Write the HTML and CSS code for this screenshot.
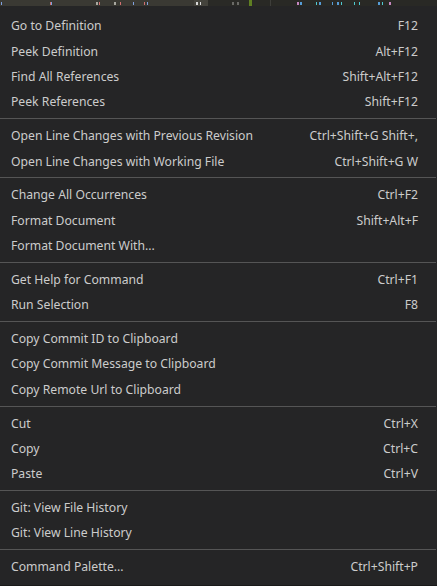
FILE: index.html
```html
<!DOCTYPE html>
<html>
<head>
<meta charset="utf-8">
<link rel="stylesheet" href="styles.css">
</head>
<body>
<div class="editor-strip">
  <div class="seg seg-a">
    <i class="mk w1 blu" style="margin-left:1px"></i>
    <i class="mk w1 red" style="margin-left:48px"></i>
    <i class="mk w1 blu"></i>
    <i class="mk w2 gry" style="margin-left:44px"></i>
    <i class="mk w1 red" style="margin-left:1px"></i>
    <i class="mk w2 gry" style="margin-left:14px"></i>
    <i class="mk w1 red" style="margin-left:4px"></i>
    <i class="mk w1 blu" style="margin-left:12px"></i>
    <i class="mk w1 red" style="margin-left:10px"></i>
    <i class="mk w1 blu" style="margin-left:2px"></i>
  </div>
  <div class="seg seg-b">
    <i class="mk w2 wht" style="margin-left:2px"></i>
    <i class="mk w1 wht" style="margin-left:2px"></i>
  </div>
  <div class="seg seg-c">
    <i class="mk w2 dim" style="margin-left:24px"></i>
    <i class="mk w2 dim" style="margin-left:3px"></i>
  </div>
  <div class="gutter"></div>
  <div class="seg seg-d"></div>
  <div class="vline"></div>
  <div class="seg seg-e">
    <i class="mk w2 mag" style="margin-left:26px"></i>
    <i class="mk w2 blu2" style="margin-left:1px"></i>
    <i class="mk w1 cyn" style="margin-left:14px"></i>
    <i class="mk w2 blu2" style="margin-left:2px"></i>
    <i class="mk w1 blu2" style="margin-left:11px"></i>
    <i class="mk w2 blu2" style="margin-left:4px"></i>
    <i class="mk w1 cyn" style="margin-left:2px"></i>
    <i class="mk w1 cyn" style="margin-left:12px"></i>
    <i class="mk w1 cyn" style="margin-left:4px"></i>
    <i class="mk w2 blu2" style="margin-left:18px"></i>
    <i class="mk w1 cyn" style="margin-left:2px"></i>
    <i class="mk w2 mag" style="margin-left:6px"></i>
  </div>
</div>
<div class="menu">
  <div class="item"><span class="label">Go to Definition</span><span class="key">F12</span></div>
  <div class="item"><span class="label">Peek Definition</span><span class="key">Alt+F12</span></div>
  <div class="item"><span class="label">Find All References</span><span class="key">Shift+Alt+F12</span></div>
  <div class="item"><span class="label">Peek References</span><span class="key">Shift+F12</span></div>
  <div class="sep"></div>
  <div class="item"><span class="label">Open Line Changes with Previous Revision</span><span class="key">Ctrl+Shift+G Shift+,</span></div>
  <div class="item"><span class="label">Open Line Changes with Working File</span><span class="key">Ctrl+Shift+G W</span></div>
  <div class="sep"></div>
  <div class="item"><span class="label">Change All Occurrences</span><span class="key">Ctrl+F2</span></div>
  <div class="item"><span class="label">Format Document</span><span class="key">Shift+Alt+F</span></div>
  <div class="item"><span class="label">Format Document With...</span><span class="key"></span></div>
  <div class="sep"></div>
  <div class="item"><span class="label">Get Help for Command</span><span class="key">Ctrl+F1</span></div>
  <div class="item"><span class="label">Run Selection</span><span class="key">F8</span></div>
  <div class="sep"></div>
  <div class="item"><span class="label">Copy Commit ID to Clipboard</span><span class="key"></span></div>
  <div class="item"><span class="label">Copy Commit Message to Clipboard</span><span class="key"></span></div>
  <div class="item"><span class="label">Copy Remote Url to Clipboard</span><span class="key"></span></div>
  <div class="sep"></div>
  <div class="item"><span class="label">Cut</span><span class="key">Ctrl+X</span></div>
  <div class="item"><span class="label">Copy</span><span class="key">Ctrl+C</span></div>
  <div class="item"><span class="label">Paste</span><span class="key">Ctrl+V</span></div>
  <div class="sep"></div>
  <div class="item"><span class="label">Git: View File History</span><span class="key"></span></div>
  <div class="item"><span class="label">Git: View Line History</span><span class="key"></span></div>
  <div class="sep"></div>
  <div class="item"><span class="label">Command Palette...</span><span class="key">Ctrl+Shift+P</span></div>
</div>
</body>
</html>
```

FILE: styles.css
```css
html, body {
  margin: 0;
  padding: 0;
  background: #1a1a1a;
  width: 437px;
  height: 586px;
  overflow: hidden;
}

.editor-strip {
  display: flex;
  height: 6px;
  overflow: hidden;
  background: #292925;
}

.seg {
  height: 6px;
  display: flex;
  align-items: flex-end;
  padding-bottom: 1px;
  box-sizing: border-box;
}

.mk {
  display: block;
  height: 3px;
  flex: none;
}
.w1 { width: 1px; }
.w2 { width: 2px; }
.blu { background: #7fa0e0; }
.red { background: #d07070; }
.gry { background: #a8a8a0; }
.wht { background: #d8d8d8; }
.dim { background: #6a6a66; }
.mag { background: #c586c0; }
.blu2 { background: #569cd6; }
.cyn { background: #4ec9d0; }

.seg-a { width: 194px; background: #3a3933; }
.seg-b { width: 14px; background: #44433c; }
.seg-c { width: 41px; background: #2a2a26; }
.gutter { width: 3px; height: 6px; background: #5f7f22; }
.seg-d { width: 18px; background: #292925; }
.vline { width: 1px; height: 6px; background: #3e3e3a; }
.seg-e { flex: 1; background: #292925; }

.menu {
  background: #252526;
  color: #cccccc;
  font-family: "Noto Sans", "Open Sans", sans-serif;
  font-size: 12.2px;
  padding: 7px 0 5px;
  height: 579px;
  box-sizing: border-box;
}

.item {
  display: flex;
  justify-content: space-between;
  align-items: center;
  height: 25.4px;
  padding: 0 19px 0 11px;
}

.key {
  color: #cccccc;
}

.sep {
  height: 1px;
  background: #555555;
  margin: 3.7px 1px 3.7px 0;
}
```
